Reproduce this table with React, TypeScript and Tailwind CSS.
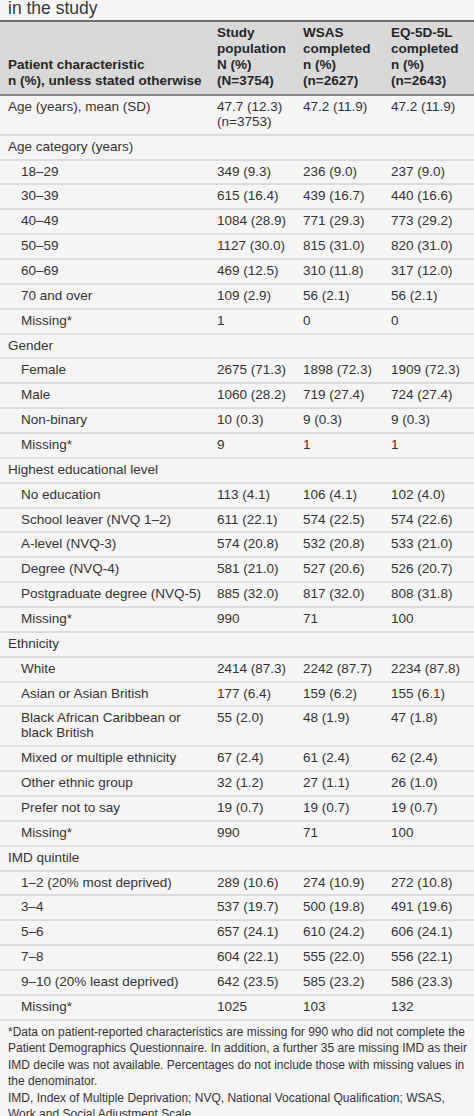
import React from "react";

type Row = {
  label: React.ReactNode;
  vals?: React.ReactNode[];
  indent?: boolean;
};

const rows: Row[] = [
  {
    label: "Age (years), mean (SD)",
    vals: [
      <>
        47.7 (12.3)
        <br />
        (n=3753)
      </>,
      "47.2 (11.9)",
      "47.2 (11.9)",
    ],
  },
  { label: "Age category (years)" },
  { label: "18–29", vals: ["349 (9.3)", "236 (9.0)", "237 (9.0)"], indent: true },
  { label: "30–39", vals: ["615 (16.4)", "439 (16.7)", "440 (16.6)"], indent: true },
  { label: "40–49", vals: ["1084 (28.9)", "771 (29.3)", "773 (29.2)"], indent: true },
  { label: "50–59", vals: ["1127 (30.0)", "815 (31.0)", "820 (31.0)"], indent: true },
  { label: "60–69", vals: ["469 (12.5)", "310 (11.8)", "317 (12.0)"], indent: true },
  { label: "70 and over", vals: ["109 (2.9)", "56 (2.1)", "56 (2.1)"], indent: true },
  { label: "Missing*", vals: ["1", "0", "0"], indent: true },
  { label: "Gender" },
  { label: "Female", vals: ["2675 (71.3)", "1898 (72.3)", "1909 (72.3)"], indent: true },
  { label: "Male", vals: ["1060 (28.2)", "719 (27.4)", "724 (27.4)"], indent: true },
  { label: "Non-binary", vals: ["10 (0.3)", "9 (0.3)", "9 (0.3)"], indent: true },
  { label: "Missing*", vals: ["9", "1", "1"], indent: true },
  { label: "Highest educational level" },
  { label: "No education", vals: ["113 (4.1)", "106 (4.1)", "102 (4.0)"], indent: true },
  { label: "School leaver (NVQ 1–2)", vals: ["611 (22.1)", "574 (22.5)", "574 (22.6)"], indent: true },
  { label: "A-level (NVQ-3)", vals: ["574 (20.8)", "532 (20.8)", "533 (21.0)"], indent: true },
  { label: "Degree (NVQ-4)", vals: ["581 (21.0)", "527 (20.6)", "526 (20.7)"], indent: true },
  { label: "Postgraduate degree (NVQ-5)", vals: ["885 (32.0)", "817 (32.0)", "808 (31.8)"], indent: true },
  { label: "Missing*", vals: ["990", "71", "100"], indent: true },
  { label: "Ethnicity" },
  { label: "White", vals: ["2414 (87.3)", "2242 (87.7)", "2234 (87.8)"], indent: true },
  { label: "Asian or Asian British", vals: ["177 (6.4)", "159 (6.2)", "155 (6.1)"], indent: true },
  {
    label: (
      <>
        Black African Caribbean or
        <br />
        black British
      </>
    ),
    vals: ["55 (2.0)", "48 (1.9)", "47 (1.8)"],
    indent: true,
  },
  { label: "Mixed or multiple ethnicity", vals: ["67 (2.4)", "61 (2.4)", "62 (2.4)"], indent: true },
  { label: "Other ethnic group", vals: ["32 (1.2)", "27 (1.1)", "26 (1.0)"], indent: true },
  { label: "Prefer not to say", vals: ["19 (0.7)", "19 (0.7)", "19 (0.7)"], indent: true },
  { label: "Missing*", vals: ["990", "71", "100"], indent: true },
  { label: "IMD quintile" },
  { label: "1–2 (20% most deprived)", vals: ["289 (10.6)", "274 (10.9)", "272 (10.8)"], indent: true },
  { label: "3–4", vals: ["537 (19.7)", "500 (19.8)", "491 (19.6)"], indent: true },
  { label: "5–6", vals: ["657 (24.1)", "610 (24.2)", "606 (24.1)"], indent: true },
  { label: "7–8", vals: ["604 (22.1)", "555 (22.0)", "556 (22.1)"], indent: true },
  { label: "9–10 (20% least deprived)", vals: ["642 (23.5)", "585 (23.2)", "586 (23.3)"], indent: true },
  { label: "Missing*", vals: ["1025", "103", "132"], indent: true },
];

const grid = "grid grid-cols-[209px_86px_88px_1fr] pl-2 pr-1";

export default function App() {
  return (
    <div className="min-h-[1116px] w-[474px] overflow-hidden bg-[#f5f5f5] font-['Liberation_Sans',Arial,sans-serif] text-[#333]">
      <div className="h-[19.5px] pl-2 pt-[1px] text-[17.5px] leading-[14px] text-[#3a3a3a]">in the study</div>

      <div
        className={`${grid} items-end border-y-2 border-t-[#6e6e6e] border-b-[#858585] bg-[#d9d9d9] pb-[5px] pt-[3.5px] text-[13.5px] font-bold leading-4 text-[#262626]`}
      >
        <div>
          Patient characteristic
          <br />
          n (%), unless stated otherwise
        </div>
        <div>
          Study
          <br />
          population
          <br />
          N (%)
          <br />
          (N=3754)
        </div>
        <div>
          WSAS
          <br />
          completed
          <br />
          n (%)
          <br />
          (n=2627)
        </div>
        <div>
          EQ-5D-5L
          <br />
          completed
          <br />
          n (%)
          <br />
          (n=2643)
        </div>
      </div>

      <div className="text-[13.5px] leading-[14.86px]">
        {rows.map((r, i) => (
          <div key={i} className={`${grid} border-b-2 border-[#dcdcdc] py-[4px]`}>
            <div className={r.indent ? "pl-[13px]" : ""}>{r.label}</div>
            {r.vals ? r.vals.map((v, j) => <div key={j}>{v}</div>) : null}
          </div>
        ))}
      </div>

      <div className="pl-2 pt-[3px] text-[12px] leading-[16.5px] whitespace-nowrap text-[#333]">
        <p>
          *Data on patient-reported characteristics are missing for 990 who did not complete the
          <br />
          Patient Demographics Questionnaire. In addition, a further 35 are missing IMD as their
          <br />
          IMD decile was not available. Percentages do not include those with missing values in
          <br />
          the denominator.
        </p>
        <p>
          IMD, Index of Multiple Deprivation; NVQ, National Vocational Qualification; WSAS,
          <br />
          Work and Social Adjustment Scale.
        </p>
      </div>
    </div>
  );
}
